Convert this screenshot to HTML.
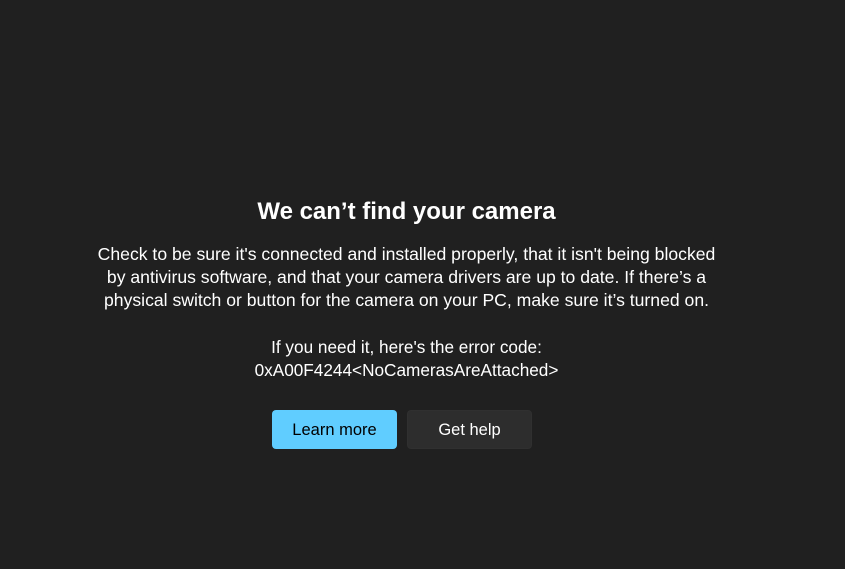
<!DOCTYPE html>
<html><head><meta charset="utf-8"><style>
html,body{margin:0;padding:0;background:#202020;width:845px;height:569px;overflow:hidden;font-family:"Liberation Sans",sans-serif;color:#fff}
.c{position:absolute;left:0;width:813px;text-align:center;white-space:nowrap}
.t{top:198px;font-size:24px;font-weight:bold;}
.b{font-size:17.6px;line-height:23px}
.btn{position:absolute;top:410px;height:39px;width:125px;border-radius:4px;font-size:16.5px;line-height:41px;text-align:center}
</style></head><body>
<div class="c t">We can’t find your camera</div>
<div class="c b" style="top:243px">Check to be sure it's connected and installed properly, that it isn't being blocked<br>by antivirus software, and that your camera drivers are up to date. If there’s a<br>physical switch or button for the camera on your PC, make sure it’s turned on.</div>
<div class="c b" style="top:336px;font-size:17.2px">If you need it, here's the error code:<br>0xA00F4244&lt;NoCamerasAreAttached&gt;</div>
<div class="btn" style="left:272px;background:#60cdff;color:#000">Learn more</div>
<div class="btn" style="left:407px;background:#2d2d2d;color:#fff;border:1px solid #303030;box-sizing:border-box;line-height:39px">Get help</div>
</body></html>
